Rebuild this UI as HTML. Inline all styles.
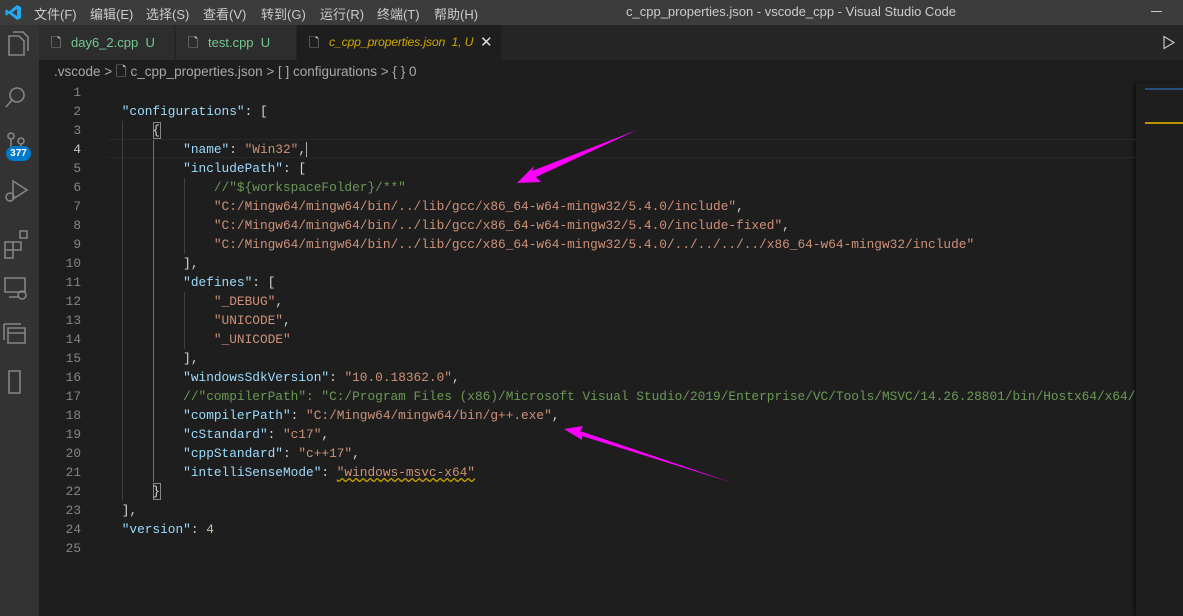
<!DOCTYPE html>
<html><head><meta charset="utf-8"><style>
*{margin:0;padding:0;box-sizing:border-box}
html,body{width:1183px;height:616px;overflow:hidden}
body{background:#1e1e1e;font-family:"Liberation Sans","Noto Sans CJK SC",sans-serif;position:relative}
#title{position:absolute;left:0;top:0;width:1183px;height:25px;background:#3c3c3c;color:#ccc;font-size:13px}
#title .m{position:absolute;top:4px}
#act{position:absolute;left:0;top:25px;width:39px;height:591px;background:#333}
#tabs{position:absolute;left:39px;top:25px;width:1144px;height:35px;background:#252526}
.tab{position:absolute;top:0;height:35px;background:#2d2d2d;font-size:13px;line-height:35px;color:#73c991}
#bc{position:absolute;left:39px;top:60px;width:1144px;height:23px;background:#1e1e1e;color:#a9a9a9;font-size:13.5px;line-height:23px}
.ln{position:absolute;width:42px;text-align:right;color:#858585;font-family:"Liberation Mono",monospace;font-size:12.8px;left:39px}
.row{position:absolute;left:91px;line-height:19px;color:#d4d4d4;font-family:"Liberation Mono",monospace;font-size:12.8px;white-space:pre}
.k{color:#9cdcfe}.s{color:#ce9178}.c{color:#6a9955}.n{color:#b5cea8}
.g{position:absolute;width:1px;background:#404040}
</style></head><body>
<div id="title">
<svg style="position:absolute;left:5px;top:4px" width="17" height="17" viewBox="0 0 17 17"><path d="M12 1 L16 3 V14 L12 16 L4 9.5 L1.5 11.5 L0.5 11 V6 L1.5 5.5 L4 7.5 Z M12 5 L7 8.5 L12 12 Z" fill="#23a9f2"/></svg>
<span class="m" style="left:34px">文件(F)</span><span class="m" style="left:90px">编辑(E)</span><span class="m" style="left:146px">选择(S)</span><span class="m" style="left:203px">查看(V)</span><span class="m" style="left:261px">转到(G)</span><span class="m" style="left:320px">运行(R)</span><span class="m" style="left:377px">终端(T)</span><span class="m" style="left:434px">帮助(H)</span>
<span class="m" style="left:626px">c_cpp_properties.json - vscode_cpp - Visual Studio Code</span>
<div style="position:absolute;left:1151px;top:11px;width:11px;height:1px;background:#ccc"></div>
</div>
<div id="act">
<svg width="39" height="591" viewBox="0 0 39 591" fill="none" stroke="#858585" stroke-width="1.6">
<path d="M9 11 h10 l5 5 v14 h-15 z M13 7 h10 l5 5 v14"/>
<circle cx="17" cy="70" r="7"/><path d="M12 75 l-6 7"/>
<circle cx="11" cy="111" r="3"/><circle cx="21" cy="116" r="3"/><path d="M11 114 v14 M21 119 q0 5 -8 8"/>
<path d="M13 156 l14 9 l-14 9 z"/><circle cx="10" cy="172" r="4"/>
<path d="M5 217 h8 v8 h-8 z M13 217 h8 v8 h-8 z M5 225 h8 v8 h-8 z M20 206 h7 v7 h-7 z"/>
<path d="M5 253 h20 v14 h-20 z M9 272 h10"/><circle cx="22" cy="270" r="4"/>
<path d="M8 303 h17 v15 h-17 z M4 299 h17 M4 299 v16 M8 308 h17"/>
<path d="M9 346 h11 v22 h-11 z"/>
</svg>
<div style="position:absolute;left:6px;top:121px;width:25px;height:15px;border-radius:8px;background:#007acc;color:#fff;font-size:10px;font-weight:bold;text-align:center;line-height:15px">377</div>
</div>
<div id="tabs">
<div class="tab" style="left:0;width:136px;border-right:1px solid #252526"><span style="position:absolute;left:12px;color:#ccc">🗋</span><span style="position:absolute;left:32px">day6_2.cpp&nbsp; U</span></div>
<div class="tab" style="left:137px;width:120px"><span style="position:absolute;left:12px;color:#ccc">🗋</span><span style="position:absolute;left:32px">test.cpp&nbsp; U</span></div>
<div class="tab" style="left:258px;width:204px;background:#1e1e1e;color:#cca700;font-style:italic"><span style="position:absolute;left:12px;color:#ccc;font-style:normal">🗋</span><span style="position:absolute;left:32px;font-size:12.3px;letter-spacing:-0.2px">c_cpp_properties.json&nbsp; 1, U</span><span style="position:absolute;left:183px;color:#ddd;font-style:normal;font-size:15px">✕</span></div>
<svg style="position:absolute;left:1123px;top:10px" width="14" height="15"><path d="M2 1.5 L12 7.5 L2 13.5 Z" fill="none" stroke="#c5c5c5" stroke-width="1.2"/></svg>
</div>
<div id="bc"><span style="position:absolute;left:15px">.vscode &gt; <span style="color:#ccc">🗋</span> c_cpp_properties.json &gt; [ ] configurations &gt; { } 0</span></div>
<div style="position:absolute;left:1136px;top:83px;width:47px;height:533px;background:#1e1e1e;box-shadow:-2px 0 3px rgba(0,0,0,0.5)"></div>
<div style="position:absolute;left:1145px;top:88px;width:38px;height:2px;background:#264f78"></div>
<div style="position:absolute;left:1145px;top:122px;width:38px;height:2px;background:#b89500"></div>
<div style="position:absolute;left:107px;top:139px;width:1029px;height:19px;border-top:1px solid #282828;border-bottom:1px solid #282828"></div>
<div class="g" style="left:122px;top:121px;height:380px"></div>
<div class="g" style="left:153px;top:140px;height:342px;background:#707070"></div>
<div class="g" style="left:184px;top:178px;height:76px"></div>
<div class="g" style="left:184px;top:292px;height:57px"></div>
<div style="position:absolute;left:153px;top:122px;width:8px;height:17px;border:1px solid #888"></div>
<div style="position:absolute;left:153px;top:483px;width:8px;height:17px;border:1px solid #888"></div>
<div class="ln" style="top:83px;line-height:19px">1<br>2<br>3<br><span style="color:#c6c6c6">4</span><br>5<br>6<br>7<br>8<br>9<br>10<br>11<br>12<br>13<br>14<br>15<br>16<br>17<br>18<br>19<br>20<br>21<br>22<br>23<br>24<br>25</div>
<div class="row" style="top:83px">
    <span class="k">"configurations"</span>: [
        {
            <span class="k">"name"</span>: <span class="s">"Win32"</span>,<span style="border-left:1px solid #aeafad"></span>
            <span class="k">"includePath"</span>: [
                <span class="c">//"${workspaceFolder}/**"</span>
                <span class="s">"C:/Mingw64/mingw64/bin/../lib/gcc/x86_64-w64-mingw32/5.4.0/include"</span>,
                <span class="s">"C:/Mingw64/mingw64/bin/../lib/gcc/x86_64-w64-mingw32/5.4.0/include-fixed"</span>,
                <span class="s">"C:/Mingw64/mingw64/bin/../lib/gcc/x86_64-w64-mingw32/5.4.0/../../../../x86_64-w64-mingw32/include"</span>
            ],
            <span class="k">"defines"</span>: [
                <span class="s">"_DEBUG"</span>,
                <span class="s">"UNICODE"</span>,
                <span class="s">"_UNICODE"</span>
            ],
            <span class="k">"windowsSdkVersion"</span>: <span class="s">"10.0.18362.0"</span>,
            <span class="c">//"compilerPath": "C:/Program Files (x86)/Microsoft Visual Studio/2019/Enterprise/VC/Tools/MSVC/14.26.28801/bin/Hostx64/x64/</span>
            <span class="k">"compilerPath"</span>: <span class="s">"C:/Mingw64/mingw64/bin/g++.exe"</span>,
            <span class="k">"cStandard"</span>: <span class="s">"c17"</span>,
            <span class="k">"cppStandard"</span>: <span class="s">"c++17"</span>,
            <span class="k">"intelliSenseMode"</span>: <span class="s" style="text-decoration:underline wavy #cca700">"windows-msvc-x64"</span>
        }
    ],
    <span class="k">"version"</span>: <span class="n">4</span>
</div>
<svg style="position:absolute;left:0;top:0" width="1183" height="616">
<path d="M637 130 L532 171 L534 166 L517 183 L541 182 L536 177 Z" fill="#f0f"/>
<path d="M733 483 L580 431 L583 426 L564 429 L582 440 L582 436 Z" fill="#f0f"/>
</svg>
</body></html>
